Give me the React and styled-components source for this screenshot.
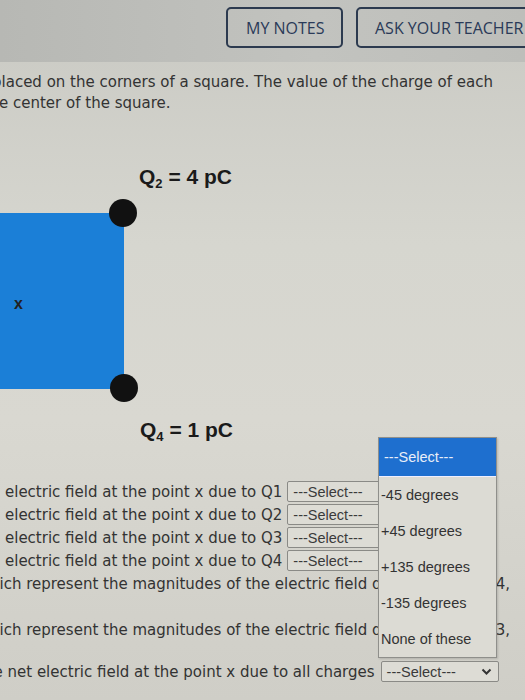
import React from "react";
import styled, { createGlobalStyle } from "styled-components";

const GlobalStyle = createGlobalStyle`
	html, body {
		margin: 0;
		padding: 0;
		overflow: hidden;
		background: #cfcfc9;
	}
`;

const Page = styled.div`
	position: relative;
	width: 525px;
	height: 700px;
	overflow: hidden;
	background: linear-gradient(180deg, #c9c9c3 0%, #d6d6cf 35%, #d9d8d1 60%, #cfcec7 100%);
	font-family: "DejaVu Sans", Verdana, sans-serif;
	color: #2f2f2f;
`;

const Header = styled.div`
	height: 62px;
	box-sizing: border-box;
	display: flex;
	gap: 13px;
	padding: 7px 0 0 226px;
	background: linear-gradient(90deg, #b7b8b4 0%, #c2c3bf 60%, #bdbeba 100%);
`;

const HeaderButton = styled.button`
	flex: none;
	width: ${(p) => p.$width}px;
	height: 41px;
	box-sizing: border-box;
	border: 2px solid #2c3a4f;
	border-radius: 5px;
	background: transparent;
	color: #2a3a58;
	font-family: "Open Sans", sans-serif;
	font-size: 16px;
	text-align: left;
	padding: 0 0 0 ${(p) => p.$pad}px;
`;

const Intro = styled.div`
	padding-top: 10px;
	font-size: 15px;
	line-height: 21px;
	color: #333;
`;

const Line = styled.div`
	white-space: nowrap;
	margin-left: ${(p) => p.$shift || 0}px;
`;

const Figure = styled.svg`
	display: block;
	margin-top: 36px;
	width: 260px;
	height: 295px;
`;

const Questions = styled.div`
	margin-top: 35px;
	display: flex;
	flex-direction: column;
	font-size: 15px;
	color: #333;
`;

const Row = styled.div`
	display: flex;
	align-items: center;
	height: 23px;
	margin-top: ${(p) => p.$gap || 0}px;
	margin-left: ${(p) => p.$shift || 0}px;
	white-space: nowrap;
`;

const Label = styled.span`
	flex: none;
`;

const Select = styled.div`
	flex: none;
	display: flex;
	align-items: center;
	justify-content: space-between;
	box-sizing: border-box;
	width: 118px;
	height: 21px;
	margin-left: ${(p) => p.$gap}px;
	padding: 0 6px 0 5px;
	border: 1px solid #8a8a86;
	border-radius: 2px;
	background: #dddcd5;
	font-family: "Liberation Sans", Arial, sans-serif;
	font-size: 14.5px;
	color: #3a3a3a;
`;

const Popup = styled.div`
	position: absolute;
	left: 378px;
	top: 437px;
	width: 119px;
	box-sizing: border-box;
	border: 1px solid #8f8f8b;
	background: #dcdbd4;
	font-family: "Liberation Sans", Arial, sans-serif;
	font-size: 14.5px;
	color: #333;
	box-shadow: 1px 1px 2px rgba(0, 0, 0, 0.15);
`;

const Option = styled.div`
	display: flex;
	align-items: center;
	height: ${(p) => (p.$active ? 38 : 36)}px;
	padding-left: ${(p) => (p.$active ? 5 : 2)}px;
	background: ${(p) => (p.$active ? "#1e6fcf" : "transparent")};
	color: ${(p) => (p.$active ? "#e8eef8" : "#333")};
	border-bottom: ${(p) => (p.$active ? "1px solid #eef" : "none")};
`;

const Chevron = () => (
	<svg width="11" height="8" viewBox="0 0 11 8">
		<path d="M1.5 1.5 L5.5 5.5 L9.5 1.5" fill="none" stroke="#333" strokeWidth="2" />
	</svg>
);

const Charge = ({ x, y, sub, value }) => (
	<text x={x} y={y} fontFamily="Liberation Sans, Arial, sans-serif" fontWeight="bold" fontSize="21" fill="#1a1a1a">
		Q
		<tspan fontSize="13" dy="4">{sub}</tspan>
		<tspan dy="-4"> = {value} pC</tspan>
	</text>
);

const options = ["-45 degrees", "+45 degrees", "+135 degrees", "-135 degrees", "None of these"];

export default function App() {
	return (
		<Page>
			<GlobalStyle />
			<Header>
				<HeaderButton $width={117} $pad={18}>MY NOTES</HeaderButton>
				<HeaderButton $width={190} $pad={17}>ASK YOUR TEACHER</HeaderButton>
			</Header>
			<Intro>
				<Line $shift={-8}>placed on the corners of a square. The value of the charge of each</Line>
				<Line $shift={-1}>e center of the square.</Line>
			</Intro>
			<Figure viewBox="0 0 260 295">
				<rect x="-10" y="63" width="134" height="176" fill="#1b7fd7" />
				<circle cx="123" cy="63" r="14" fill="#111" />
				<circle cx="124" cy="238" r="14" fill="#111" />
				<text x="14" y="159" fontFamily="Liberation Sans, Arial, sans-serif" fontWeight="bold" fontSize="16" fill="#222">x</text>
				<Charge x={139} y={34} sub="2" value="4" />
				<Charge x={140} y={287} sub="4" value="1" />
			</Figure>
			<Questions>
				{[1, 2, 3, 4].map((n) => (
					<Row key={n} $shift={5}>
						<Label>electric field at the point x due to Q{n}</Label>
						<Select $gap={5}>---Select---</Select>
					</Row>
				))}
				<Row $shift={-10}>
					<Label>hich represent the magnitudes of the electric field due to Q1 and Q4,</Label>
				</Row>
				<Row $shift={-10} $gap={23}>
					<Label>hich represent the magnitudes of the electric field due to Q1 and Q3,</Label>
				</Row>
				<Row $shift={-16} $gap={19}>
					<Label>he net electric field at the point x due to all charges</Label>
					<Select $gap={6}>
						---Select---
						<Chevron />
					</Select>
				</Row>
			</Questions>
			<Popup>
				<Option $active>---Select---</Option>
				{options.map((o) => (
					<Option key={o}>{o}</Option>
				))}
			</Popup>
		</Page>
	);
}
